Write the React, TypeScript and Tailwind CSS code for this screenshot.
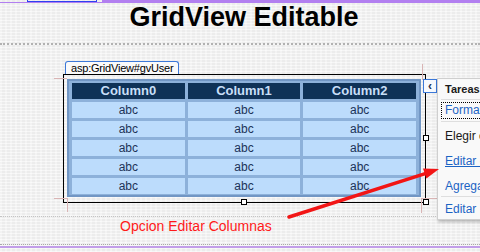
const cols = ['Column0', 'Column1', 'Column2']
const rows = [0, 1, 2, 3, 4]

function Handle({ className }: { className: string }) {
  return <div className={`absolute w-[6px] h-[6px] bg-white border border-black ${className}`} />
}

function GuideMarks() {
  return (
    <>
      <div className="absolute left-[54px] top-[78px] w-[13px] h-px bg-[#d9b4b4]" />
      <div className="absolute left-[422px] top-[64px] w-px h-[16px] bg-[#d9b4b4]" />
      <div className="absolute left-[54px] top-[198px] w-[14px] h-px bg-[#d9b4b4]" />
      <div className="absolute left-[67px] top-[198px] w-px h-[14px] bg-[#d9b4b4]" />
      <div className="absolute left-[421px] top-[198px] w-px h-[15px] bg-[#d9b4b4]" />
      <div className="absolute left-[421px] top-[198px] w-[19px] h-px bg-[#d9b4b4]" />
    </>
  )
}

function SmartTag() {
  return (
    <div className="absolute left-[437px] top-[78px] w-[170px] h-[142px] bg-[#f9f9f9] border border-[#cfcfcf] shadow-[1px_2px_3px_rgba(0,0,0,0.25)] flex flex-col text-[12px] leading-[15px] whitespace-nowrap">
      <div className="h-[20px] pt-[4px] pl-[7px] text-[11px] leading-[13px] font-bold text-[#1a1a1a]">
        Tareas de GridView
      </div>
      <div className="mx-[3px] h-px bg-[#dedede]" />
      <div className="mt-[2px] ml-[3px] h-[17px] pl-[3px] border border-dotted border-black text-[#1c64c4]">
        Formato automático...
      </div>
      <div className="mt-[2px] mx-[3px] h-px bg-[#dedede]" />
      <div className="mt-[7px] pl-[7px] text-[#1a1a1a]">Elegir origen de datos:</div>
      <div className="mt-[10px] pl-[7px] text-[#1c64c4] underline">Editar columnas...</div>
      <div className="mt-[10px] pl-[7px] text-[#1c64c4]">Agregar nueva columna...</div>
      <div className="mt-[2px] mx-[3px] h-px bg-[#dedede]" />
      <div className="mt-[5px] pl-[7px] text-[#1c64c4]">Editar plantillas</div>
    </div>
  )
}

function Arrow() {
  return (
    <svg className="absolute left-0 top-0 pointer-events-none" width="480" height="252" viewBox="0 0 480 252">
      <line x1="289" y1="217" x2="426" y2="173.4" stroke="#f21515" strokeWidth="3.5" strokeLinecap="round" />
      <polygon points="439,169 426.4,178.6 423,168.6" fill="#f21515" />
    </svg>
  )
}

export default function App() {
  return (
    <div className="relative w-[480px] h-[252px] overflow-hidden flex flex-col font-['Liberation_Sans',Arial,sans-serif] bg-[#ececec] bg-[image:repeating-linear-gradient(0deg,rgba(255,255,255,0.55)_0_1px,transparent_1px_3px),repeating-linear-gradient(90deg,rgba(255,255,255,0.35)_0_2px,transparent_2px_5px)]">
      {/* top border */}
      <div className="flex h-[3px]">
        <div className="relative w-[102px] border-b-[1px] border-[#b27ff0]">
          <div className="absolute left-[27px] top-0 w-[70px] h-[2px] border-x border-b border-[#2f3ff0]" />
        </div>
        <div className="flex-1 bg-[#b27ff0]" />
      </div>

      <div className="mt-[1px] h-[27px] pl-[8px] text-center text-[27px] leading-[27px] font-bold text-black">
        GridView Editable
      </div>

      <div className="mt-[12px] border-t-2 border-dotted border-[#b2b2b2]" />

      {/* designer surface */}
      <div className="mt-[16px] pl-[63px] flex flex-col items-start">
        <div className="ml-[2px] h-[13px] w-[114px] pl-[5px] rounded-t-[3px] border border-b-0 border-[#3c78d8] bg-[#fafafa] text-[11px] leading-[12px] tracking-[-0.2px] text-black">
          asp:GridView#gvUser
        </div>
        <div className="relative w-[363px] h-[129px] border border-black pt-[4px] pl-[3px]">
          <div className="w-[354px] border-2 border-[#7196c4] bg-[#8db1da] px-[3px] pt-[2px] pb-[1px] grid grid-cols-3 gap-[3px]">
            {cols.map((c) => (
              <div key={c} className="h-[16px] bg-[#0f3257] flex items-center justify-center text-[13px] font-bold text-[#c8dff8]">
                {c}
              </div>
            ))}
            {rows.map((r) =>
              cols.map((c) => (
                <div key={`${r}-${c}`} className="h-[16px] bg-[#bcdcfc] flex items-center justify-center text-[12px] text-[#1d3358]">
                  abc
                </div>
              ))
            )}
          </div>

          <div className="absolute left-[359px] top-[4px] w-[14px] h-[14px] border border-[#3b78d8] bg-[#f6f9fd] flex items-center justify-center text-[12px] leading-none font-bold text-[#203050]">
            ‹
          </div>
          <Handle className="left-[359px] top-[60px]" />
          <Handle className="left-[177px] top-[124px]" />
          <Handle className="left-[359px] top-[124px]" />
        </div>
      </div>

      <div className="mt-[13px] border-t border-dotted border-[#c4c4c4]" />

      <div className="mt-[1px] h-[16px] pl-[120px] text-[14px] leading-[16px] text-[#ff1a1a]">
        Opcion Editar Columnas
      </div>

      <div className="mt-[10px] border-t border-dotted border-[#a9a9a9]" />
      <div className="mt-[1px] h-[2px] bg-[#c29ee9]" />

      <GuideMarks />
      <SmartTag />
      <Arrow />
    </div>
  )
}
